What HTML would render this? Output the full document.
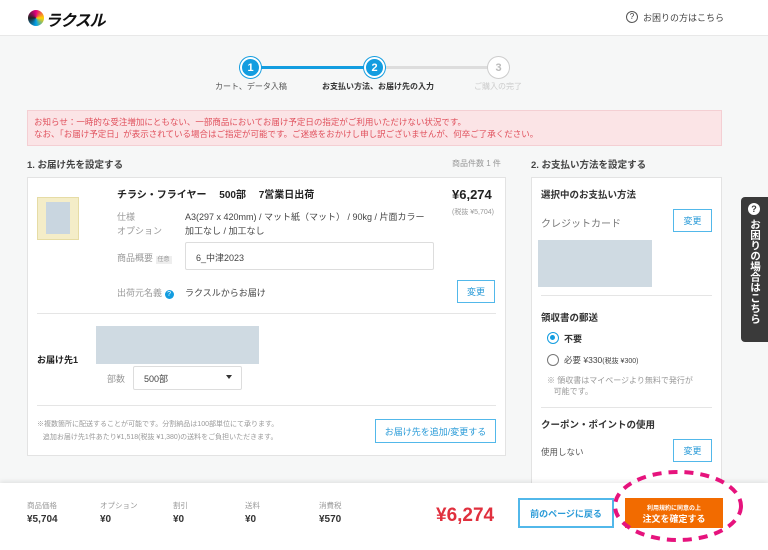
<!DOCTYPE html><html><head><meta charset="utf-8"><style>
*{box-sizing:border-box;margin:0;padding:0}
body{width:768px;height:550px;overflow:hidden;background:#f6f7f7;font-family:"Liberation Sans","Noto Sans CJK JP",sans-serif;color:#333;position:relative;font-size:9px}
.a{position:absolute;white-space:nowrap}
.hdr{position:absolute;left:0;top:0;width:768px;height:36px;background:#fff;border-bottom:1px solid #e8e8e8}
.card{position:absolute;background:#fff;border:1px solid #e3e3e3}
.btn{position:absolute;border:1.5px solid #52b8ea;color:#2a9bd8;background:#fff;display:flex;align-items:center;justify-content:center;font-size:9px}
.circ{position:absolute;width:21px;height:21px;border-radius:50%;background:#139de0;color:#fff;font-weight:bold;font-size:11px;display:flex;align-items:center;justify-content:center;border:2px solid #fff;box-shadow:0 0 0 1px #139de0}
.g{color:#999}
.line{position:absolute;height:1px;background:#e5e5e5}
.gb{position:absolute;background:#cfdae2}
</style></head><body>
<div class="hdr">
<div class="a" style="left:28px;top:10px;width:16px;height:16px;border-radius:50%;background:conic-gradient(#e4007f,#ffd400,#00a0e9,#222,#e4007f)"></div>
<div class="a" style="left:45px;top:7px;font-size:16px;font-weight:bold;font-style:italic;letter-spacing:-1px;color:#111">ラクスル</div>
<div class="a" style="left:626px;top:11px;width:12px;height:12px;border:1px solid #555;border-radius:50%;font-size:8px;text-align:center;line-height:10px">?</div>
<div class="a" style="left:643px;top:11px;font-size:9px;color:#444">お困りの方はこちら</div>
</div>
<div class="a" style="left:250px;top:66px;width:124px;height:3px;background:#139de0"></div>
<div class="a" style="left:374px;top:66px;width:124px;height:3px;background:#ddd"></div>
<div class="circ" style="left:240px;top:57px">1</div>
<div class="circ" style="left:364px;top:57px">2</div>
<div class="circ" style="left:488px;top:57px;background:#fff;color:#bbb;box-shadow:0 0 0 1px #ccc">3</div>
<div class="a" style="left:215px;top:81px;font-size:8px;color:#555">カート、データ入稿</div>
<div class="a" style="left:322px;top:81px;font-size:8px;font-weight:bold;color:#333">お支払い方法、お届け先の入力</div>
<div class="a" style="left:474px;top:81px;font-size:8px;color:#ccc">ご購入の完了</div>
<div class="a" style="left:27px;top:110px;width:695px;height:36px;background:#fbe4e6;border:1px solid #f4cfd3;color:#e0505c;font-size:8.5px;padding:5px 6px;line-height:12px">お知らせ：一時的な受注増加にともない、一部商品においてお届け予定日の指定がご利用いただけない状況です。<br>なお、「お届け予定日」が表示されている場合はご指定が可能です。ご迷惑をおかけし申し訳ございませんが、何卒ご了承ください。</div>
<div class="a" style="left:27px;top:157px;font-size:9.5px;font-weight:bold;color:#444">1. お届け先を設定する</div>
<div class="a g" style="left:452px;top:158px;font-size:8px">商品件数 1 件</div>
<div class="card" style="left:27px;top:177px;width:479px;height:279px"></div>
<div class="a" style="left:37px;top:197px;width:42px;height:43px;background:#f4edc8;border:1px solid #e6dca5"><div style="margin:4px 8px;width:24px;height:32px;background:#c9d6e0"></div></div>
<div class="a" style="left:117px;top:186px;font-size:10px;font-weight:bold;color:#222">チラシ・フライヤー　 500部　 7営業日出荷</div>
<div class="a" style="left:452px;top:187px;font-size:13px;font-weight:bold;color:#222">¥6,274</div>
<div class="a g" style="left:452px;top:207px;font-size:7px">(税抜 ¥5,704)</div>
<div class="a g" style="left:117px;top:210px;font-size:9px;line-height:14px">仕様<br>オプション</div>
<div class="a" style="left:185px;top:210px;font-size:9px;line-height:14px;color:#444">A3(297 x 420mm) / マット紙（マット） / 90kg / 片面カラー<br>加工なし / 加工なし</div>
<div class="a g" style="left:117px;top:251px;font-size:9px">商品概要 <span style="background:#eee;font-size:6px;padding:1px 2px">任意</span></div>
<div class="a" style="left:185px;top:242px;width:249px;height:28px;border:1px solid #ddd;border-radius:2px;padding:8px 10px;font-size:9px;color:#444">6_中津2023</div>
<div class="a g" style="left:117px;top:286px;font-size:9px">出荷元名義 <span style="display:inline-block;width:9px;height:9px;border-radius:50%;background:#139de0;color:#fff;font-size:7px;text-align:center;line-height:9px">?</span></div>
<div class="a" style="left:185px;top:286px;font-size:9px;color:#444">ラクスルからお届け</div>
<div class="btn" style="left:457px;top:280px;width:38px;height:23px">変更</div>
<div class="line" style="left:37px;top:313px;width:459px"></div>
<div class="gb" style="left:96px;top:326px;width:163px;height:38px"></div>
<div class="a" style="left:37px;top:353px;font-size:9px;font-weight:bold;color:#222">お届け先1</div>
<div class="a g" style="left:107px;top:372px;font-size:9px">部数</div>
<div class="a" style="left:133px;top:366px;width:109px;height:24px;border:1px solid #ddd;border-radius:2px;padding:5px 10px;font-size:9px;color:#444">500部<span style="position:absolute;right:9px;top:8px;border:3px solid transparent;border-top:4px solid #333"></span></div>
<div class="line" style="left:37px;top:405px;width:459px"></div>
<div class="a g" style="left:37px;top:418px;font-size:7px;line-height:13px">※複数箇所に配送することが可能です。分割納品は100部単位にて承ります。<br>&nbsp;&nbsp;&nbsp;追加お届け先1件あたり¥1,518(税抜 ¥1,380)の送料をご負担いただきます。</div>
<div class="btn" style="left:375px;top:419px;width:121px;height:24px">お届け先を追加/変更する</div>
<div class="a" style="left:531px;top:157px;font-size:9.5px;font-weight:bold;color:#444">2. お支払い方法を設定する</div>
<div class="card" style="left:531px;top:177px;width:191px;height:310px"></div>
<div class="a" style="left:541px;top:187px;font-size:9.5px;font-weight:bold;color:#333">選択中のお支払い方法</div>
<div class="a" style="left:541px;top:215px;font-size:10px;color:#777">クレジットカード</div>
<div class="btn" style="left:673px;top:209px;width:39px;height:23px">変更</div>
<div class="gb" style="left:538px;top:240px;width:114px;height:47px"></div>
<div class="line" style="left:541px;top:295px;width:171px"></div>
<div class="a" style="left:541px;top:310px;font-size:9.5px;font-weight:bold;color:#333">領収書の郵送</div>
<div class="a" style="left:547px;top:332px;width:12px;height:12px;border:1.5px solid #139de0;border-radius:50%"><div style="margin:2px;width:5px;height:5px;border-radius:50%;background:#139de0"></div></div>
<div class="a" style="left:564px;top:332px;font-size:9px;font-weight:bold;color:#333">不要</div>
<div class="a" style="left:547px;top:354px;width:12px;height:12px;border:1px solid #777;border-radius:50%"></div>
<div class="a" style="left:564px;top:354px;font-size:8.5px;color:#444">必要 ¥330<span style="font-size:7px">(税抜 ¥300)</span></div>
<div class="a g" style="left:547px;top:375px;font-size:8px;line-height:11px">※ 領収書はマイページより無料で発行が<br>&nbsp;&nbsp;&nbsp;可能です。</div>
<div class="line" style="left:541px;top:407px;width:171px"></div>
<div class="a" style="left:541px;top:417px;font-size:9.5px;font-weight:bold;color:#333">クーポン・ポイントの使用</div>
<div class="a" style="left:541px;top:446px;font-size:8.5px;color:#555">使用しない</div>
<div class="btn" style="left:673px;top:439px;width:39px;height:23px">変更</div>
<div class="a" style="left:741px;top:197px;width:27px;height:145px;background:#3a3a3a;border-radius:4px 0 0 4px"></div>
<div class="a" style="left:748px;top:203px;width:12px;height:12px;border-radius:50%;background:#fff;color:#3a3a3a;font-size:9px;font-weight:bold;text-align:center;line-height:12px">?</div>
<div class="a" style="left:746px;top:219px;color:#fff;font-size:10.5px;font-weight:bold;writing-mode:vertical-rl;line-height:17px">お困りの場合はこちら</div>
<div class="a" style="left:0;top:483px;width:768px;height:67px;background:#fff;box-shadow:0 -2px 4px rgba(0,0,0,.08)"></div>
<div class="a g" style="left:27px;top:500px;font-size:7.5px">商品価格</div><div class="a" style="left:27px;top:514px;font-size:10px;font-weight:bold">¥5,704</div>
<div class="a g" style="left:100px;top:500px;font-size:7.5px">オプション</div><div class="a" style="left:100px;top:514px;font-size:10px;font-weight:bold">¥0</div>
<div class="a g" style="left:173px;top:500px;font-size:7.5px">割引</div><div class="a" style="left:173px;top:514px;font-size:10px;font-weight:bold">¥0</div>
<div class="a g" style="left:245px;top:500px;font-size:7.5px">送料</div><div class="a" style="left:245px;top:514px;font-size:10px;font-weight:bold">¥0</div>
<div class="a g" style="left:319px;top:500px;font-size:7.5px">消費税</div><div class="a" style="left:319px;top:514px;font-size:10px;font-weight:bold">¥570</div>
<div class="a" style="left:436px;top:505px;font-size:19px;font-weight:bold;color:#e0303e">¥6,274</div>
<div class="btn" style="left:518px;top:498px;width:96px;height:30px;border-width:2px;font-weight:bold">前のページに戻る</div>
<div class="a" style="left:625px;top:498px;width:98px;height:30px;background:#f26b00;color:#fff;text-align:center;font-weight:bold"><div style="font-size:6px;margin-top:5px">利用規約に同意の上</div><div style="font-size:9px">注文を確定する</div></div>
<svg class="a" style="left:608px;top:470px" width="140" height="80"><ellipse cx="70" cy="36" rx="63" ry="34" fill="none" stroke="#e6137d" stroke-width="4" stroke-dasharray="9 7"/></svg>
</body></html>
